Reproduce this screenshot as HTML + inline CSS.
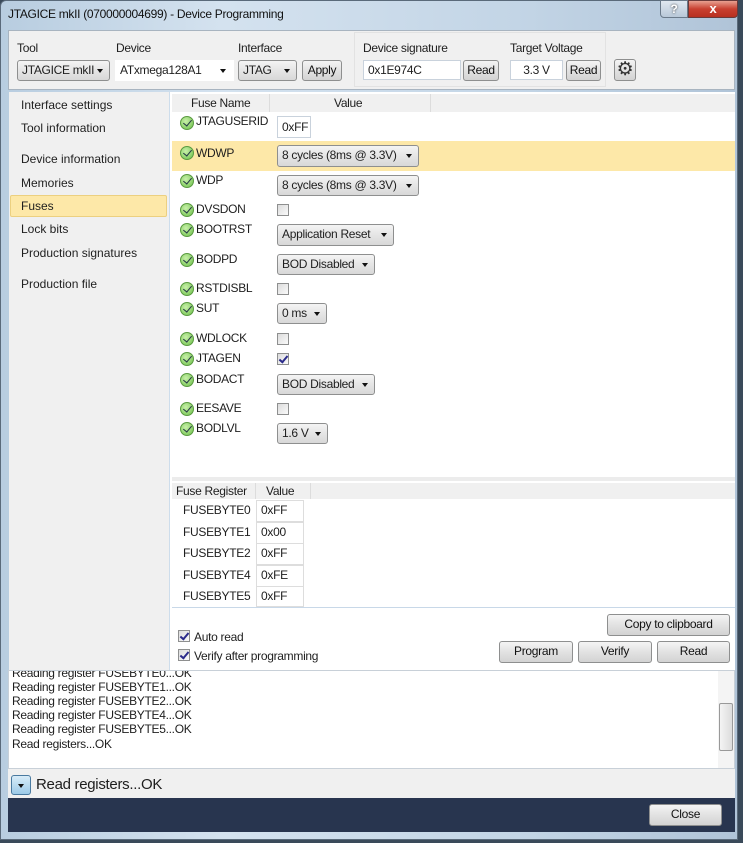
<!DOCTYPE html>
<html><head><meta charset="utf-8"><style>
*{box-sizing:border-box;margin:0;padding:0}
body{width:743px;height:843px;overflow:hidden;background:#3a4a5a;font-family:"Liberation Sans",sans-serif;font-size:12px;color:#1e1e1e;position:relative;letter-spacing:-0.3px}
.a{position:absolute}
.t{position:absolute;white-space:nowrap;line-height:14px}
.nav{letter-spacing:0}
.btn{position:absolute;border:1px solid #8e8f8f;border-radius:3px;background:linear-gradient(#f4f4f4,#e2e2e2 50%,#d3d3d3);text-align:center;line-height:19px;font-size:12px;color:#111}
.sel{position:absolute;border:1px solid #8e8f8f;border-radius:3px;background:linear-gradient(#f4f4f4,#e5e5e5 50%,#d8d8d8);line-height:19px;padding-left:4px;font-size:12px;white-space:nowrap}
.sel:after{content:"";position:absolute;right:6px;top:8px;border-left:3px solid transparent;border-right:3px solid transparent;border-top:4px solid #111}
.inp{position:absolute;border:1px solid #c9d2dc;background:#fff;line-height:19px;padding-left:4px;white-space:nowrap}
.cb{position:absolute;width:12px;height:12px;border:1px solid #8e8f8f;background:linear-gradient(135deg,#dcdcdc,#fafafa)}
.ok{position:absolute;width:14px;height:14px;border-radius:50%;background:radial-gradient(circle at 40% 35%,#c8f0a8,#6cc04a);border:1px solid #5a9a40}
.ok:after{content:"";position:absolute;left:4px;top:1px;width:4px;height:7px;border-right:1.5px solid #234;border-bottom:1.5px solid #234;transform:rotate(40deg)}
.nm{position:absolute;left:196px;white-space:nowrap;line-height:14px}
.chk:after{content:"";position:absolute;left:3px;top:0px;width:3px;height:7px;border-right:2px solid #2a2a8a;border-bottom:2px solid #2a2a8a;transform:rotate(40deg)}
</style></head><body>
<div class="a" style="left:0;top:0;width:738px;height:840px;background:linear-gradient(90deg,#b8cde0,#d4e2ef 30%,#c3d5e6 70%,#b0c4d8);border:1px solid #5a6a7a;border-radius:6px 6px 0 0"></div>
<div class="t" style="left:8px;top:7px;font-size:12px;color:#111">JTAGICE mkII (070000004699) - Device Programming</div>
<div class="a" style="left:660px;top:0;width:28px;height:18px;border:1px solid #6a7a8a;border-radius:0 0 0 4px;background:linear-gradient(#e0e8f0,#b8c8d8);text-align:center;color:#fff;font-weight:bold;font-size:12px;line-height:16px;text-shadow:0 0 2px #333">?</div>
<div class="a" style="left:688px;top:0;width:50px;height:18px;border:1px solid #6a3a3a;border-radius:0 0 4px 0;background:linear-gradient(#e8a090,#c84030 50%,#b83020);text-align:center;color:#fff;font-weight:bold;font-size:13px;line-height:16px">x</div>
<div class="a" style="left:8px;top:30px;width:727px;height:60px;background:#f0f0f0;border:1px solid #a8b4c0"></div>
<div class="a" style="left:354px;top:32px;width:252px;height:55px;border:1px solid #e2e2e2"></div>
<div class="t" style="left:17px;top:41px">Tool</div>
<div class="t" style="left:116px;top:41px">Device</div>
<div class="t" style="left:238px;top:41px">Interface</div>
<div class="t" style="left:363px;top:41px">Device signature</div>
<div class="t" style="left:510px;top:41px">Target Voltage</div>
<div class="sel" style="left:17px;top:60px;width:93px;height:21px">JTAGICE mkII</div>
<div class="inp" style="left:115px;top:60px;width:119px;height:21px;border-color:#fff;background:#fff">ATxmega128A1</div>
<div class="a" style="left:220px;top:69px;border-left:3px solid transparent;border-right:3px solid transparent;border-top:4px solid #111"></div>
<div class="sel" style="left:238px;top:60px;width:59px;height:21px">JTAG</div>
<div class="btn" style="left:302px;top:60px;width:40px;height:21px">Apply</div>
<div class="inp" style="left:363px;top:60px;width:98px;height:20px">0x1E974C</div>
<div class="btn" style="left:463px;top:60px;width:36px;height:21px">Read</div>
<div class="inp" style="left:510px;top:60px;width:53px;height:20px;text-align:center;padding:0">3.3 V</div>
<div class="btn" style="left:566px;top:60px;width:35px;height:21px">Read</div>
<div class="btn" style="left:614px;top:59px;width:22px;height:22px;font-size:19px;line-height:19px;color:#333">⚙</div>
<div class="a" style="left:9px;top:92px;width:160px;height:578px;background:#f0f0f0"></div>
<div class="t nav" style="left:21px;top:98px">Interface settings</div>
<div class="t nav" style="left:21px;top:121px">Tool information</div>
<div class="t nav" style="left:21px;top:152px">Device information</div>
<div class="t nav" style="left:21px;top:176px">Memories</div>
<div class="a" style="left:10px;top:195px;width:157px;height:22px;background:#fde8a8;border:1px solid #ecd080;border-radius:2px"></div>
<div class="t nav" style="left:21px;top:199px">Fuses</div>
<div class="t nav" style="left:21px;top:222px">Lock bits</div>
<div class="t nav" style="left:21px;top:246px">Production signatures</div>
<div class="t nav" style="left:21px;top:277px">Production file</div>
<div class="a" style="left:170px;top:92px;width:565px;height:578px;background:#fff"></div>
<div class="a" style="left:172px;top:94px;width:563px;height:18px;background:#f0f0f0"></div>
<div class="a" style="left:269px;top:94px;width:1px;height:18px;background:#dcdcdc"></div>
<div class="a" style="left:430px;top:94px;width:1px;height:18px;background:#dcdcdc"></div>
<div class="t" style="left:191px;top:96px">Fuse Name</div>
<div class="t" style="left:334px;top:96px">Value</div>
<div class="a" style="left:172px;top:141px;width:563px;height:30px;background:#fde8a8"></div>

<div class="ok" style="left:180px;top:116px"></div><div class="nm" style="top:114px">JTAGUSERID</div>
<div class="inp" style="left:277px;top:116px;width:34px;height:22px;line-height:20px">0xFF</div>
<div class="ok" style="left:180px;top:146px"></div><div class="nm" style="top:146px">WDWP</div>
<div class="sel" style="left:277px;top:145px;width:142px;height:22px">8 cycles (8ms @ 3.3V)</div>
<div class="ok" style="left:180px;top:174px"></div><div class="nm" style="top:173px">WDP</div>
<div class="sel" style="left:277px;top:175px;width:142px;height:21px">8 cycles (8ms @ 3.3V)</div>
<div class="ok" style="left:180px;top:203px"></div><div class="nm" style="top:202px">DVSDON</div>
<div class="cb" style="left:277px;top:204px"></div>
<div class="ok" style="left:180px;top:223px"></div><div class="nm" style="top:222px">BOOTRST</div>
<div class="sel" style="left:277px;top:224px;width:117px;height:22px">Application Reset</div>
<div class="ok" style="left:180px;top:253px"></div><div class="nm" style="top:252px">BODPD</div>
<div class="sel" style="left:277px;top:254px;width:98px;height:21px">BOD Disabled</div>
<div class="ok" style="left:180px;top:282px"></div><div class="nm" style="top:281px">RSTDISBL</div>
<div class="cb" style="left:277px;top:283px"></div>
<div class="ok" style="left:180px;top:302px"></div><div class="nm" style="top:301px">SUT</div>
<div class="sel" style="left:277px;top:303px;width:50px;height:21px">0 ms</div>
<div class="ok" style="left:180px;top:332px"></div><div class="nm" style="top:331px">WDLOCK</div>
<div class="cb" style="left:277px;top:333px"></div>
<div class="ok" style="left:180px;top:352px"></div><div class="nm" style="top:351px">JTAGEN</div>
<div class="cb chk" style="left:277px;top:353px"></div>
<div class="ok" style="left:180px;top:373px"></div><div class="nm" style="top:372px">BODACT</div>
<div class="sel" style="left:277px;top:374px;width:98px;height:21px">BOD Disabled</div>
<div class="ok" style="left:180px;top:402px"></div><div class="nm" style="top:401px">EESAVE</div>
<div class="cb" style="left:277px;top:403px"></div>
<div class="ok" style="left:180px;top:422px"></div><div class="nm" style="top:421px">BODLVL</div>
<div class="sel" style="left:277px;top:423px;width:51px;height:21px">1.6 V</div>

<div class="a" style="left:172px;top:477px;width:563px;height:4px;background:#ececec"></div>
<div class="a" style="left:172px;top:483px;width:563px;height:16px;background:#f0f0f0"></div>
<div class="a" style="left:255px;top:483px;width:1px;height:16px;background:#dcdcdc"></div>
<div class="a" style="left:310px;top:483px;width:1px;height:16px;background:#dcdcdc"></div>
<div class="t" style="left:176px;top:484px">Fuse Register</div>
<div class="t" style="left:266px;top:484px">Value</div>
<div class="t" style="left:183px;top:503px">FUSEBYTE0</div><div class="inp" style="left:256px;top:500px;width:48px;height:22px;border-color:#ddd">0xFF</div>
<div class="t" style="left:183px;top:525px">FUSEBYTE1</div><div class="inp" style="left:256px;top:522px;width:48px;height:22px;border-color:#ddd">0x00</div>
<div class="t" style="left:183px;top:546px">FUSEBYTE2</div><div class="inp" style="left:256px;top:543px;width:48px;height:22px;border-color:#ddd">0xFF</div>
<div class="t" style="left:183px;top:568px">FUSEBYTE4</div><div class="inp" style="left:256px;top:565px;width:48px;height:22px;border-color:#ddd">0xFE</div>
<div class="t" style="left:183px;top:589px">FUSEBYTE5</div><div class="inp" style="left:256px;top:586px;width:48px;height:21px;border-color:#ddd">0xFF</div>
<div class="a" style="left:172px;top:607px;width:563px;height:1px;background:#c8d8e8"></div>

<div class="cb chk" style="left:178px;top:630px"></div><div class="t" style="left:194px;top:630px">Auto read</div>
<div class="cb chk" style="left:178px;top:649px"></div><div class="t" style="left:194px;top:649px">Verify after programming</div>
<div class="btn" style="left:607px;top:614px;width:123px;height:22px">Copy to clipboard</div>
<div class="btn" style="left:499px;top:641px;width:74px;height:22px">Program</div>
<div class="btn" style="left:578px;top:641px;width:74px;height:22px">Verify</div>
<div class="btn" style="left:657px;top:641px;width:73px;height:22px">Read</div>
<div class="a" style="left:8px;top:670px;width:727px;height:99px;background:#fff;border:1px solid #c8d0d8;overflow:hidden">
<div class="t" style="left:3px;top:-5px">Reading register FUSEBYTE0...OK</div>
<div class="t" style="left:3px;top:9px">Reading register FUSEBYTE1...OK</div>
<div class="t" style="left:3px;top:23px">Reading register FUSEBYTE2...OK</div>
<div class="t" style="left:3px;top:37px">Reading register FUSEBYTE4...OK</div>
<div class="t" style="left:3px;top:51px">Reading register FUSEBYTE5...OK</div>
<div class="t" style="left:3px;top:66px">Read registers...OK</div>
<div class="a" style="left:709px;top:0;width:16px;height:97px;background:#f4f4f4"></div>
<div class="a" style="left:710px;top:32px;width:14px;height:48px;border:1px solid #999;border-radius:2px;background:linear-gradient(90deg,#f4f4f4,#dcdcdc)"></div>
</div>
<div class="a" style="left:8px;top:769px;width:727px;height:29px;background:#f0f0f0"></div>
<div class="a" style="left:11px;top:775px;width:20px;height:20px;border:1px solid #4a7aa0;border-radius:3px;background:linear-gradient(#d8ecf8,#9ccae8)"></div>
<div class="a" style="left:18px;top:784px;border-left:3px solid transparent;border-right:3px solid transparent;border-top:4px solid #111"></div>
<div class="t" style="left:36px;top:777px;font-size:15px;line-height:16px">Read registers...OK</div>
<div class="a" style="left:8px;top:798px;width:727px;height:34px;background:#28354f"></div>
<div class="btn" style="left:649px;top:804px;width:73px;height:22px">Close</div>
</body></html>
